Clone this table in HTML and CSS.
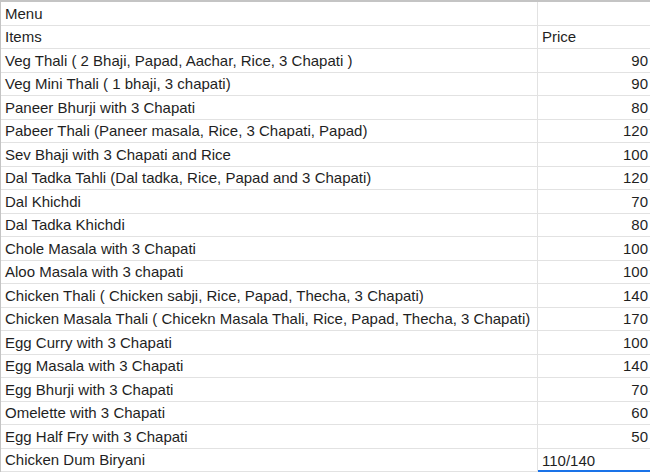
FILE: index.html
```html
<!DOCTYPE html>
<html>
<head>
<meta charset="utf-8">
<link rel="stylesheet" href="styles.css">
</head>
<body>
<div class="sheet">
  <div class="cell">Menu</div><div class="cell"></div>
  <div class="cell">Items</div><div class="cell">Price</div>
  <div class="cell">Veg Thali ( 2 Bhaji, Papad, Aachar, Rice, 3 Chapati )</div><div class="cell num">90</div>
  <div class="cell">Veg Mini Thali ( 1 bhaji, 3 chapati)</div><div class="cell num">90</div>
  <div class="cell">Paneer Bhurji with 3 Chapati</div><div class="cell num">80</div>
  <div class="cell">Pabeer Thali (Paneer masala, Rice, 3 Chapati, Papad)</div><div class="cell num">120</div>
  <div class="cell">Sev Bhaji with 3 Chapati and Rice</div><div class="cell num">100</div>
  <div class="cell">Dal Tadka Tahli (Dal tadka, Rice, Papad and 3 Chapati)</div><div class="cell num">120</div>
  <div class="cell">Dal Khichdi</div><div class="cell num">70</div>
  <div class="cell">Dal Tadka Khichdi</div><div class="cell num">80</div>
  <div class="cell">Chole Masala with 3 Chapati</div><div class="cell num">100</div>
  <div class="cell">Aloo Masala with 3 chapati</div><div class="cell num">100</div>
  <div class="cell">Chicken Thali ( Chicken sabji, Rice, Papad, Thecha, 3 Chapati)</div><div class="cell num">140</div>
  <div class="cell">Chicken Masala Thali ( Chicekn Masala Thali, Rice, Papad, Thecha, 3 Chapati)</div><div class="cell num">170</div>
  <div class="cell">Egg Curry with 3 Chapati</div><div class="cell num">100</div>
  <div class="cell">Egg Masala with 3 Chapati</div><div class="cell num">140</div>
  <div class="cell">Egg Bhurji with 3 Chapati</div><div class="cell num">70</div>
  <div class="cell">Omelette with 3 Chapati</div><div class="cell num">60</div>
  <div class="cell">Egg Half Fry with 3 Chapati</div><div class="cell num">50</div>
  <div class="cell">Chicken Dum Biryani</div><div class="cell selected">110/140</div>
</div>
</body>
</html>
```

FILE: styles.css
```css
html, body {
  margin: 0;
  padding: 0;
  background: #ffffff;
  overflow: hidden;
}
.sheet {
  display: grid;
  grid-template-columns: 537px 113px;
  grid-auto-rows: 23.5px;
  border-top: 2px solid #c4c4c4;
  border-left: 1px solid #c4c4c4;
  width: 650px;
  font-family: "Liberation Sans", Arial, sans-serif;
  font-size: 15px;
  color: #1f1f1f;
}
.cell {
  box-sizing: border-box;
  border-bottom: 1px solid #e2e2e2;
  border-right: 1px solid #e2e2e2;
  padding: 0 3px 0 4px;
  display: flex;
  align-items: center;
  white-space: nowrap;
  overflow: hidden;
}
.cell:nth-child(2n) {
  border-right: none;
}
.num {
  justify-content: flex-end;
  padding-right: 3px;
}
.selected {
  border-bottom: none;
  background: linear-gradient(to top, #1a73e8 0, #1a73e8 2px, transparent 2px);
}
```
